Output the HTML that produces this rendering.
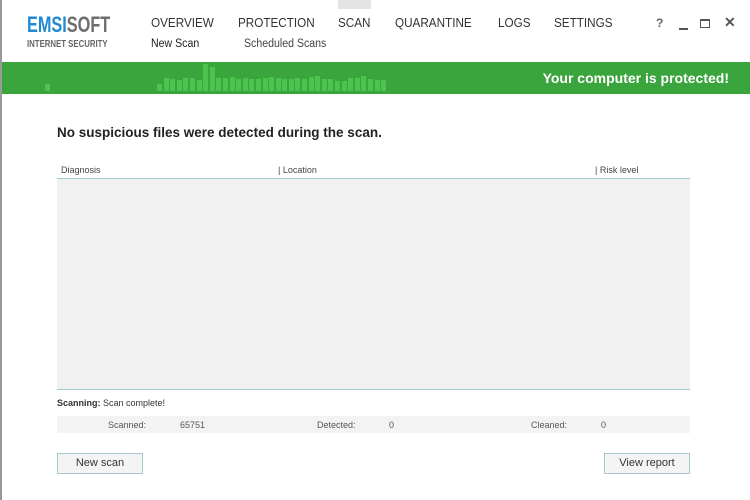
<!DOCTYPE html>
<html><head><style>
*{margin:0;padding:0;box-sizing:border-box}
body{width:750px;height:500px;background:#fff;font-family:"Liberation Sans",sans-serif;position:relative;overflow:hidden;color:#222}
.a{position:absolute;white-space:nowrap}
.nav{font-size:13px;color:#333;top:15px;transform:scaleX(0.9);transform-origin:left}
.sub{font-size:11.5px;color:#333;top:38px;transform:scaleX(0.92);transform-origin:left}
#bars{position:absolute;left:157px;top:62px;height:29px;display:flex;align-items:flex-end;gap:1.6px}
#bars div{width:5px;background:#4cc24f}
.hd{font-size:9px;color:#444;top:165px}
.st{font-size:9px;color:#555;top:420px}
.btn{position:absolute;border:1px solid #a9c7d0;background:#f4f4f4;font-size:11px;color:#333;text-align:center;line-height:19px;height:21px}
</style></head><body>
<div class="a" style="left:0;top:0;width:2px;height:500px;background:#999"></div>
<div class="a" style="left:27px;top:12px;font-size:22px;font-weight:bold;transform:scaleX(0.74);transform-origin:left"><span style="color:#1f8ad2">EMSI</span><span style="color:#6d6d6d">SOFT</span></div>
<div class="a" style="left:27px;top:39px;font-size:10px;font-weight:bold;color:#666;transform:scaleX(0.78);transform-origin:left">INTERNET SECURITY</div>
<div class="a" style="left:338px;top:0;width:33px;height:9px;background:#e4e4e4"></div>
<div class="a nav" style="left:151px">OVERVIEW</div>
<div class="a nav" style="left:238px">PROTECTION</div>
<div class="a nav" style="left:338px">SCAN</div>
<div class="a nav" style="left:395px">QUARANTINE</div>
<div class="a nav" style="left:498px">LOGS</div>
<div class="a nav" style="left:554px">SETTINGS</div>
<div class="a sub" style="left:151px;color:#222">New Scan</div>
<div class="a sub" style="left:244px;color:#444">Scheduled Scans</div>
<div class="a" style="left:656px;top:16px;font-size:12px;font-weight:bold;color:#666">?</div>
<div class="a" style="left:679px;top:28px;width:9px;height:2px;background:#555"></div>
<div class="a" style="left:700px;top:19px;width:10px;height:9px;border:1px solid #555;border-top-width:2px"></div>
<div class="a" style="left:724px;top:14px;font-size:14px;font-weight:bold;color:#555">✕</div>
<div class="a" style="left:2px;top:62px;width:748px;height:32px;background:#3aa43d"></div>
<div class="a" style="left:45px;top:84px;width:5px;height:7px;background:#4cc24f"></div>
<div id="bars">
<div style="height:7px"></div><div style="height:13px"></div><div style="height:12px"></div><div style="height:11px"></div><div style="height:13px"></div><div style="height:13px"></div><div style="height:11px"></div><div style="height:27px"></div><div style="height:24px"></div><div style="height:13px"></div><div style="height:13px"></div><div style="height:14px"></div><div style="height:12px"></div><div style="height:13px"></div><div style="height:12px"></div><div style="height:12px"></div><div style="height:13px"></div><div style="height:14px"></div><div style="height:13px"></div><div style="height:12px"></div><div style="height:12px"></div><div style="height:13px"></div><div style="height:12px"></div><div style="height:14px"></div><div style="height:15px"></div><div style="height:12px"></div><div style="height:12px"></div><div style="height:10px"></div><div style="height:10px"></div><div style="height:13px"></div><div style="height:13px"></div><div style="height:15px"></div><div style="height:12px"></div><div style="height:11px"></div><div style="height:11px"></div>
</div>
<div class="a" style="right:21px;top:70px;font-size:14px;font-weight:bold;color:#fff">Your computer is protected!</div>
<div class="a" style="left:57px;top:125px;font-size:13.5px;font-weight:bold;color:#222">No suspicious files were detected during the scan.</div>
<div class="a hd" style="left:61px">Diagnosis</div>
<div class="a hd" style="left:278px">| Location</div>
<div class="a hd" style="left:595px">| Risk level</div>
<div class="a" style="left:57px;top:178px;width:633px;height:212px;background:#f1f1f1;border-top:1px solid #9fcad4;border-bottom:1px solid #9fcad4"></div>
<div class="a" style="left:57px;top:398px;font-size:9px;color:#333"><b>Scanning:</b> Scan complete!</div>
<div class="a" style="left:57px;top:416px;width:633px;height:17px;background:#f3f3f3"></div>
<div class="a st" style="left:108px">Scanned:</div>
<div class="a st" style="left:180px">65751</div>
<div class="a st" style="left:317px">Detected:</div>
<div class="a st" style="left:389px">0</div>
<div class="a st" style="left:531px">Cleaned:</div>
<div class="a st" style="left:601px">0</div>
<div class="btn" style="left:57px;top:453px;width:86px">New scan</div>
<div class="btn" style="left:604px;top:453px;width:86px">View report</div>
</body></html>
